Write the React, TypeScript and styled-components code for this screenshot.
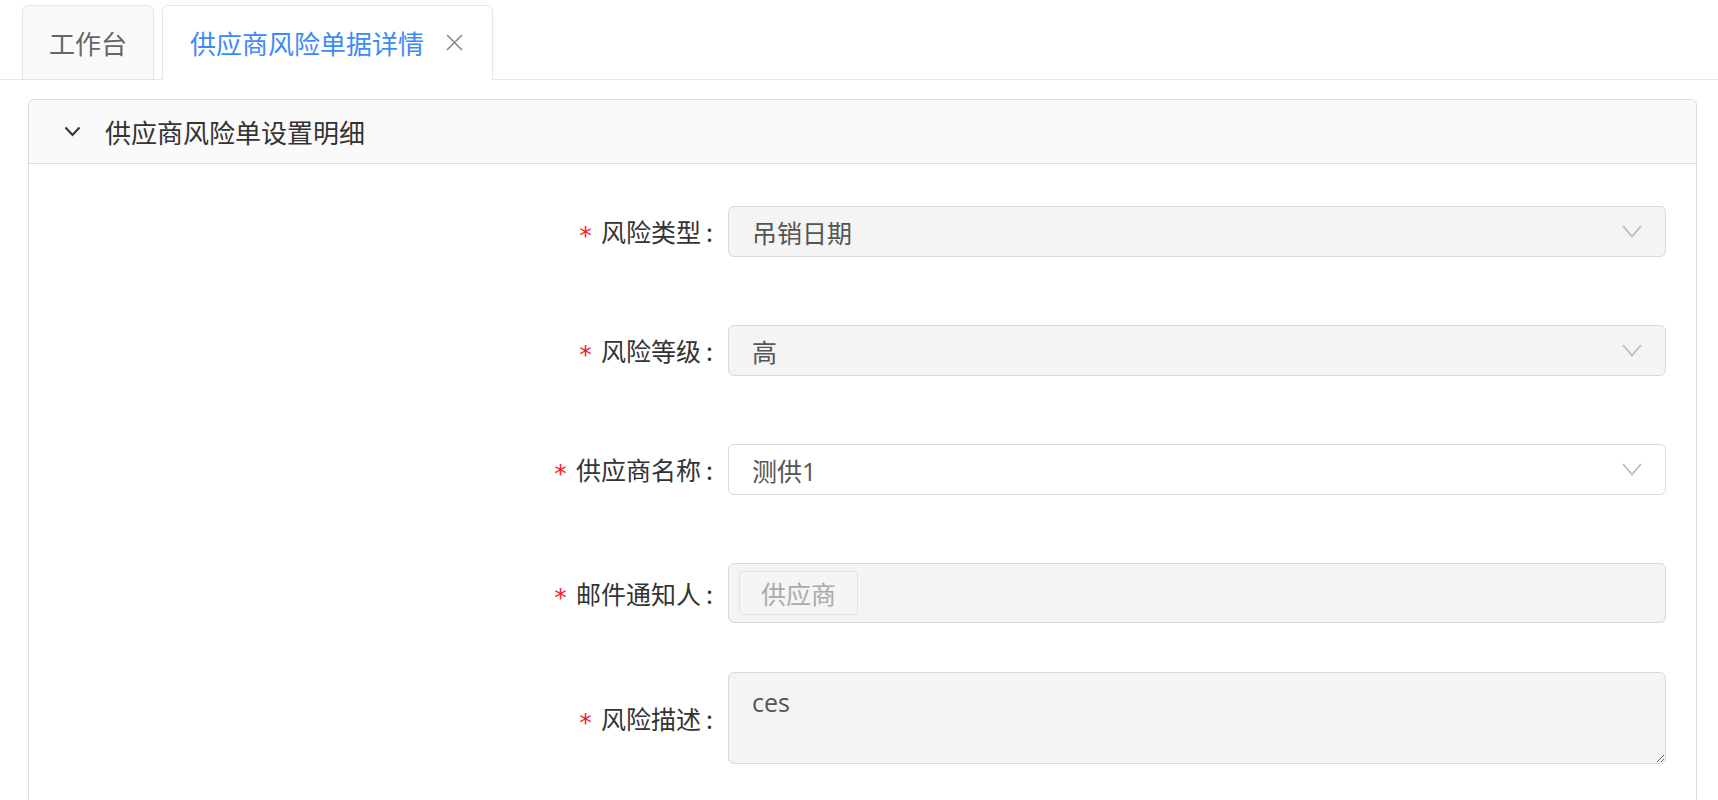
import React from "react";
import styled, { createGlobalStyle } from "styled-components";

const GlobalStyle = createGlobalStyle`
  html, body {
    margin: 0;
    padding: 0;
    background: #fff;
    overflow: hidden;
  }
  body {
    font-family: "Open Sans", "Noto Sans CJK SC", sans-serif;
    color: #333;
  }
  * { box-sizing: border-box; }
`;

const Page = styled.div`
  width: 1718px;
  height: 800px;
  overflow: hidden;
`;

const TabBar = styled.div`
  display: flex;
  align-items: flex-end;
  gap: 8px;
  padding: 5px 0 0 22px;
  height: 80px;
  border-bottom: 1px solid #e6e6e6;
`;

const Tab = styled.div<{ $active?: boolean }>`
  height: 75px;
  margin-bottom: -1px;
  display: flex;
  align-items: center;
  gap: 22px;
  padding: ${(p) => (p.$active ? "0 29px 0 27px" : "0 26px")};
  border: 1px solid #e6e6e6;
  border-bottom-color: ${(p) => (p.$active ? "#fff" : "#e6e6e6")};
  border-radius: 6px 6px 0 0;
  background: ${(p) => (p.$active ? "#fff" : "#f9f9f9")};
  color: ${(p) => (p.$active ? "#3d8af7" : "#666")};
  font-size: 26px;
  font-family: "Noto Sans CJK SC", sans-serif;
  line-height: 1;
`;

const CloseIcon = styled.svg`
  width: 17px;
  height: 17px;
  flex: none;
`;

const Panel = styled.div`
  margin: 19px 21px 0 28px;
  border: 1px solid #dcdcdc;
  border-bottom: none;
  border-radius: 6px 6px 0 0;
  background: #fff;
`;

const PanelHeader = styled.div`
  height: 64px;
  display: flex;
  align-items: center;
  gap: 24px;
  padding-left: 35px;
  background: #fafafa;
  border-bottom: 1px solid #dcdcdc;
  border-radius: 6px 6px 0 0;
  font-family: "Noto Sans CJK SC", sans-serif;
  font-size: 26px;
  color: #333;
`;

const Chevron = styled.svg`
  width: 17px;
  height: 11px;
  flex: none;
`;

const PanelBody = styled.div`
  padding: 42px 30px 80px 29px;
`;

const FormRow = styled.div<{ $gap: number }>`
  display: grid;
  grid-template-columns: 10fr 14fr;
  align-items: center;
  margin-bottom: ${(p) => p.$gap}px;
`;

const Label = styled.label`
  display: flex;
  align-items: center;
  justify-content: flex-end;
  font-family: "Noto Sans CJK SC", sans-serif;
  font-size: 25px;
  color: #333;
  line-height: 1;
`;

const Star = styled.span`
  color: #f5222d;
  font-family: "DejaVu Sans Mono", monospace;
  font-size: 25px;
  line-height: 1;
  margin-right: 8px;
  transform: translateY(4px);
`;

const Colon = styled.span`
  margin: 0 15px 0 5px;
`;

const SelectBox = styled.div<{ $disabled?: boolean }>`
  height: 51px;
  display: flex;
  align-items: center;
  justify-content: space-between;
  padding: 0 23px 0 23px;
  border: 1px solid #d9d9d9;
  border-radius: 6px;
  background: ${(p) => (p.$disabled ? "#f4f4f4" : "#fff")};
  color: #555;
  font-size: 25px;
  font-family: "Open Sans", "Noto Sans CJK SC", sans-serif;
`;

const Arrow = styled.svg`
  width: 20px;
  height: 13px;
  flex: none;
`;

const TagBox = styled.div`
  min-height: 59px;
  display: flex;
  align-items: center;
  gap: 8px;
  padding: 7px 10px;
  border: 1px solid #d9d9d9;
  border-radius: 6px;
  background: #f4f4f4;
`;

const Tag = styled.span`
  height: 44px;
  display: inline-flex;
  align-items: center;
  padding: 0 21px;
  border: 1px solid #e4e4e4;
  border-radius: 4px;
  background: #f5f5f5;
  color: #aaa;
  font-family: "Noto Sans CJK SC", sans-serif;
  font-size: 25px;
`;

const TextArea = styled.textarea`
  display: block;
  width: 100%;
  height: 92px;
  margin: 0;
  padding: 10px 23px;
  border: 1px solid #d9d9d9;
  border-radius: 6px;
  background: #f4f4f4;
  color: #555;
  font-family: "Open Sans", "Noto Sans CJK SC", sans-serif;
  font-size: 25px;
  line-height: 1.5715;
  resize: vertical;
  outline: none;
`;

const SelectArrow = () => (
  <Arrow viewBox="0 0 20 13">
    <polyline points="1,1 10,11.5 19,1" fill="none" stroke="#b8b8b8" strokeWidth="1.5" />
  </Arrow>
);

type Field = {
  label: string;
  kind: "select" | "tags" | "textarea";
  value: string;
  disabled?: boolean;
  gap: number;
};

const fields: Field[] = [
  { label: "风险类型", kind: "select", value: "吊销日期", disabled: true, gap: 68 },
  { label: "风险等级", kind: "select", value: "高", disabled: true, gap: 68 },
  { label: "供应商名称", kind: "select", value: "测供1", gap: 68 },
  { label: "邮件通知人", kind: "tags", value: "供应商", gap: 49 },
  { label: "风险描述", kind: "textarea", value: "ces", gap: 0 },
];

export default function App() {
  return (
    <Page>
      <GlobalStyle />
      <TabBar>
        <Tab>工作台</Tab>
        <Tab $active>
          供应商风险单据详情
          <CloseIcon viewBox="0 0 17 17">
            <path d="M1 1 L16 16 M16 1 L1 16" stroke="#8a8a8a" strokeWidth="1.6" fill="none" />
          </CloseIcon>
        </Tab>
      </TabBar>
      <Panel>
        <PanelHeader>
          <Chevron viewBox="0 0 17 11">
            <polyline points="1.5,1.5 8.5,9 15.5,1.5" fill="none" stroke="#333" strokeWidth="2" />
          </Chevron>
          供应商风险单设置明细
        </PanelHeader>
        <PanelBody>
          {fields.map((f) => (
            <FormRow key={f.label} $gap={f.gap}>
              <Label>
                <Star>*</Star>
                {f.label}
                <Colon>:</Colon>
              </Label>
              {f.kind === "select" && (
                <SelectBox $disabled={f.disabled}>
                  <span>{f.value}</span>
                  <SelectArrow />
                </SelectBox>
              )}
              {f.kind === "tags" && (
                <TagBox>
                  <Tag>{f.value}</Tag>
                </TagBox>
              )}
              {f.kind === "textarea" && <TextArea readOnly value={f.value} />}
            </FormRow>
          ))}
        </PanelBody>
      </Panel>
    </Page>
  );
}
